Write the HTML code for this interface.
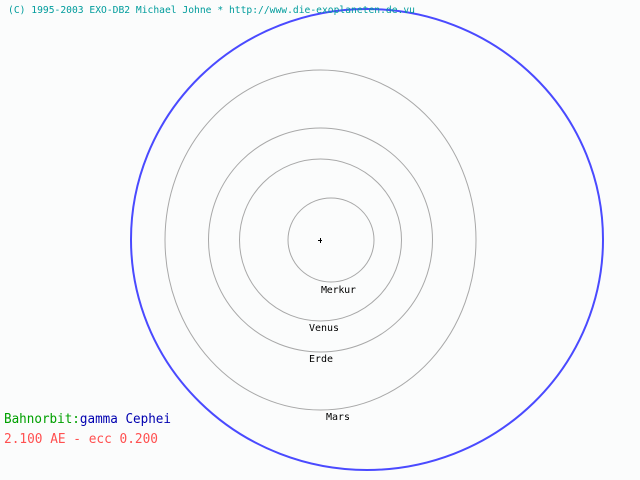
<!DOCTYPE html>
<html><head><meta charset="utf-8"><style>
html,body{margin:0;padding:0;background:#fbfcfc;}
svg{display:block;}
text{font-family:"DejaVu Sans Mono","Liberation Mono",monospace;}
</style></head><body>
<svg width="640" height="480" viewBox="0 0 640 480" xmlns="http://www.w3.org/2000/svg">
<rect width="640" height="480" fill="#fbfcfc"/>
<g fill="none" stroke="#a8a8a8" stroke-width="1">
<ellipse cx="331" cy="240" rx="43" ry="42"/>
<ellipse cx="320.5" cy="240" rx="81" ry="81"/>
<ellipse cx="320.5" cy="240" rx="112" ry="112"/>
<ellipse cx="320.5" cy="240" rx="155.5" ry="170"/>
</g>
<ellipse cx="367" cy="239.5" rx="236" ry="230.5" fill="none" stroke="#4a4aff" stroke-width="2"/>
<path d="M318 240.5h4M320.5 238v5" stroke="#000" stroke-width="1"/>
<g font-size="10" fill="#000">
<text x="321" y="293" textLength="35">Merkur</text>
<text x="309" y="331" textLength="30">Venus</text>
<text x="309" y="362" textLength="24">Erde</text>
<text x="326" y="420" textLength="24">Mars</text>
</g>
<text x="8" y="13" font-size="10" fill="#009c9c" textLength="407" lengthAdjust="spacingAndGlyphs">(C) 1995-2003 EXO-DB2 Michael Johne * http://www.die-exoplaneten.de.vu</text>
<text x="4" y="423" font-size="13" fill="#00a000" textLength="167" lengthAdjust="spacingAndGlyphs">Bahnorbit:<tspan fill="#0000b0">gamma Cephei</tspan></text>
<text x="4" y="443" font-size="13" fill="#ff5050" textLength="154" lengthAdjust="spacingAndGlyphs">2.100 AE - ecc 0.200</text>
</svg>
</body></html>
